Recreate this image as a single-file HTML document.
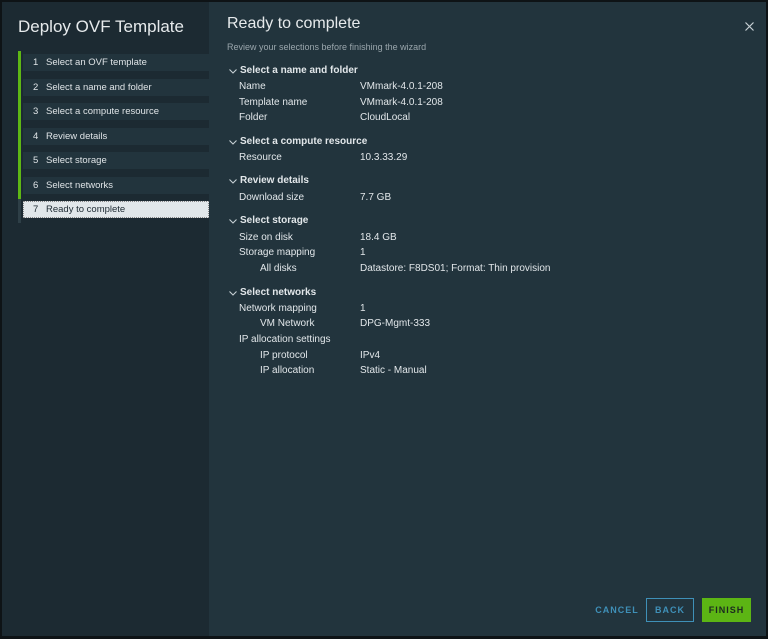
<!DOCTYPE html>
<html><head><meta charset="utf-8"><style>
*{margin:0;padding:0;box-sizing:border-box}
body{width:768px;height:639px;background:#0e1316;font-family:"Liberation Sans",sans-serif;overflow:hidden;position:relative}
.dlg{position:absolute;left:2px;top:2px;width:764px;height:634px;background:#22343d}
.left{position:absolute;left:0;top:0;width:207px;height:634px;background:#1c2a32}
.left h1{position:absolute;left:16px;top:15px;font-size:17px;font-weight:normal;color:#e6eaec}
.bar{position:absolute;left:16px;top:49px;width:3px;height:148px;background:#5eb715}
.bar2{position:absolute;left:16px;top:197px;width:3px;height:24px;background:#2e3f47}
.step{position:absolute;left:21px;width:186px;height:17px;background:#22343d;color:#dfe4e7;font-size:9.5px;line-height:17px;padding-left:10px}
.step b{font-weight:normal;display:inline-block;width:13px}
.step.sel{background:#e1e7ea;color:#1d2a32;border:1px dotted #888;line-height:15px;padding-left:9px}
.right{position:absolute;left:207px;top:0;width:557px;height:634px}
.right h2{position:absolute;left:18px;top:13px;font-size:16px;font-weight:normal;color:#e6eaec}
.sub{position:absolute;left:18px;top:40px;font-size:9px;color:#9aa6ac}
.x{position:absolute;left:536px;top:20px}
.r{position:absolute;font-size:10px;color:#e2e7ea}
.h{font-weight:bold;left:31px}
.chev{position:absolute;left:20px}
.btn{position:absolute;top:596px;height:24px;font-size:9px;font-weight:bold;letter-spacing:1px;line-height:24px;text-align:center}
</style></head><body>
<div class="dlg">
<div class="left">
<h1>Deploy OVF Template</h1>
<div class="bar"></div><div class="bar2"></div>
<div class="step" style="top:52px"><b>1</b>Select an OVF template</div>
<div class="step" style="top:77px"><b>2</b>Select a name and folder</div>
<div class="step" style="top:101px"><b>3</b>Select a compute resource</div>
<div class="step" style="top:126px"><b>4</b>Review details</div>
<div class="step" style="top:150px"><b>5</b>Select storage</div>
<div class="step" style="top:175px"><b>6</b>Select networks</div>
<div class="step sel" style="top:199px"><b>7</b>Ready to complete</div>
</div>
<div class="right">
<h2>Ready to complete</h2>
<div class="sub">Review your selections before finishing the wizard</div>
<svg class="x" width="9" height="9" viewBox="0 0 9 9"><path d="M0.5 0.5L8.5 8.5M8.5 0.5L0.5 8.5" stroke="#c7d0d4" stroke-width="1.2"/></svg>
<svg class="chev" style="top:67px" width="8" height="5" viewBox="0 0 8 5"><path d="M0.5 0.5L4 4L7.5 0.5" fill="none" stroke="#c7d0d4" stroke-width="1.1"/></svg><div class="r h" style="top:63px">Select a name and folder</div>
<div class="r" style="left:30px;top:79px">Name</div><div class="r" style="left:151px;top:79px">VMmark-4.0.1-208</div>
<div class="r" style="left:30px;top:95px">Template name</div><div class="r" style="left:151px;top:95px">VMmark-4.0.1-208</div>
<div class="r" style="left:30px;top:110px">Folder</div><div class="r" style="left:151px;top:110px">CloudLocal</div>
<svg class="chev" style="top:138px" width="8" height="5" viewBox="0 0 8 5"><path d="M0.5 0.5L4 4L7.5 0.5" fill="none" stroke="#c7d0d4" stroke-width="1.1"/></svg><div class="r h" style="top:134px">Select a compute resource</div>
<div class="r" style="left:30px;top:150px">Resource</div><div class="r" style="left:151px;top:150px">10.3.33.29</div>
<svg class="chev" style="top:177px" width="8" height="5" viewBox="0 0 8 5"><path d="M0.5 0.5L4 4L7.5 0.5" fill="none" stroke="#c7d0d4" stroke-width="1.1"/></svg><div class="r h" style="top:173px">Review details</div>
<div class="r" style="left:30px;top:190px">Download size</div><div class="r" style="left:151px;top:190px">7.7 GB</div>
<svg class="chev" style="top:217px" width="8" height="5" viewBox="0 0 8 5"><path d="M0.5 0.5L4 4L7.5 0.5" fill="none" stroke="#c7d0d4" stroke-width="1.1"/></svg><div class="r h" style="top:213px">Select storage</div>
<div class="r" style="left:30px;top:230px">Size on disk</div><div class="r" style="left:151px;top:230px">18.4 GB</div>
<div class="r" style="left:30px;top:245px">Storage mapping</div><div class="r" style="left:151px;top:245px">1</div>
<div class="r" style="left:51px;top:261px">All disks</div><div class="r" style="left:151px;top:261px">Datastore: F8DS01; Format: Thin provision</div>
<svg class="chev" style="top:289px" width="8" height="5" viewBox="0 0 8 5"><path d="M0.5 0.5L4 4L7.5 0.5" fill="none" stroke="#c7d0d4" stroke-width="1.1"/></svg><div class="r h" style="top:285px">Select networks</div>
<div class="r" style="left:30px;top:301px">Network mapping</div><div class="r" style="left:151px;top:301px">1</div>
<div class="r" style="left:51px;top:316px">VM Network</div><div class="r" style="left:151px;top:316px">DPG-Mgmt-333</div>
<div class="r" style="left:30px;top:332px">IP allocation settings</div>
<div class="r" style="left:51px;top:348px">IP protocol</div><div class="r" style="left:151px;top:348px">IPv4</div>
<div class="r" style="left:51px;top:363px">IP allocation</div><div class="r" style="left:151px;top:363px">Static - Manual</div>
<div class="btn" style="left:383px;width:50px;color:#3f90b8">CANCEL</div>
<div class="btn" style="left:437px;width:48px;border:1px solid #3f90b8;color:#3f90b8;line-height:22px">BACK</div>
<div class="btn" style="left:493px;width:49px;background:#5cb514;color:#1c2a20">FINISH</div>
</div>
</div>
</body></html>
